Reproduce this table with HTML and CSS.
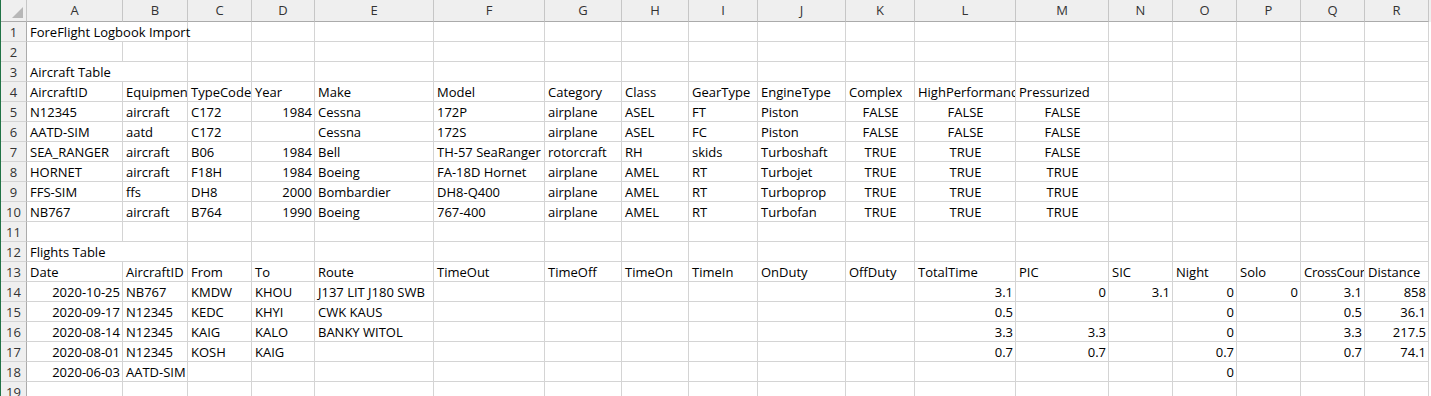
FILE: index.html
```html
<!DOCTYPE html>
<html>
<head>
<meta charset="utf-8">
<title>ForeFlight Logbook Import</title>
<link rel="stylesheet" href="styles.css">
</head>
<body>
<div class="sheet">
  <div class="row head">
    <div class="corner"><svg class="tri" width="11" height="11" viewBox="0 0 11 11"><polygon points="11,0 11,11 0,11" fill="#b7b7b7"/></svg></div>
    <div class="ch">A</div><div class="ch">B</div><div class="ch">C</div><div class="ch">D</div><div class="ch">E</div><div class="ch">F</div><div class="ch">G</div><div class="ch">H</div><div class="ch">I</div><div class="ch">J</div><div class="ch">K</div><div class="ch">L</div><div class="ch">M</div><div class="ch">N</div><div class="ch">O</div><div class="ch">P</div><div class="ch">Q</div><div class="ch">R</div>
  </div>

  <div class="row">
    <div class="rh">1</div>
    <div class="c span2">ForeFlight Logbook Import</div><div class="c"></div><div class="c"></div><div class="c"></div><div class="c"></div><div class="c"></div><div class="c"></div><div class="c"></div><div class="c"></div><div class="c"></div><div class="c"></div><div class="c"></div><div class="c"></div><div class="c"></div><div class="c"></div><div class="c"></div><div class="c"></div>
  </div>

  <div class="row">
    <div class="rh">2</div>
    <div class="c"></div><div class="c"></div><div class="c"></div><div class="c"></div><div class="c"></div><div class="c"></div><div class="c"></div><div class="c"></div><div class="c"></div><div class="c"></div><div class="c"></div><div class="c"></div><div class="c"></div><div class="c"></div><div class="c"></div><div class="c"></div><div class="c"></div><div class="c"></div>
  </div>

  <div class="row">
    <div class="rh">3</div>
    <div class="c span2">Aircraft Table</div><div class="c"></div><div class="c"></div><div class="c"></div><div class="c"></div><div class="c"></div><div class="c"></div><div class="c"></div><div class="c"></div><div class="c"></div><div class="c"></div><div class="c"></div><div class="c"></div><div class="c"></div><div class="c"></div><div class="c"></div><div class="c"></div>
  </div>

  <div class="row">
    <div class="rh">4</div>
    <div class="c">AircraftID</div><div class="c cut">Equipmen</div><div class="c">TypeCode</div><div class="c">Year</div><div class="c">Make</div><div class="c">Model</div><div class="c">Category</div><div class="c">Class</div><div class="c">GearType</div><div class="c">EngineType</div><div class="c">Complex</div><div class="c cut">HighPerformanc</div><div class="c">Pressurized</div><div class="c"></div><div class="c"></div><div class="c"></div><div class="c"></div><div class="c"></div>
  </div>

  <div class="row">
    <div class="rh">5</div>
    <div class="c">N12345</div><div class="c">aircraft</div><div class="c">C172</div><div class="c r">1984</div><div class="c">Cessna</div><div class="c">172P</div><div class="c">airplane</div><div class="c">ASEL</div><div class="c">FT</div><div class="c">Piston</div><div class="c m">FALSE</div><div class="c m">FALSE</div><div class="c m">FALSE</div><div class="c"></div><div class="c"></div><div class="c"></div><div class="c"></div><div class="c"></div>
  </div>

  <div class="row">
    <div class="rh">6</div>
    <div class="c">AATD-SIM</div><div class="c">aatd</div><div class="c">C172</div><div class="c r"></div><div class="c">Cessna</div><div class="c">172S</div><div class="c">airplane</div><div class="c">ASEL</div><div class="c">FC</div><div class="c">Piston</div><div class="c m">FALSE</div><div class="c m">FALSE</div><div class="c m">FALSE</div><div class="c"></div><div class="c"></div><div class="c"></div><div class="c"></div><div class="c"></div>
  </div>

  <div class="row">
    <div class="rh">7</div>
    <div class="c">SEA_RANGER</div><div class="c">aircraft</div><div class="c">B06</div><div class="c r">1984</div><div class="c">Bell</div><div class="c">TH-57 SeaRanger</div><div class="c">rotorcraft</div><div class="c">RH</div><div class="c">skids</div><div class="c">Turboshaft</div><div class="c m">TRUE</div><div class="c m">TRUE</div><div class="c m">FALSE</div><div class="c"></div><div class="c"></div><div class="c"></div><div class="c"></div><div class="c"></div>
  </div>

  <div class="row">
    <div class="rh">8</div>
    <div class="c">HORNET</div><div class="c">aircraft</div><div class="c">F18H</div><div class="c r">1984</div><div class="c">Boeing</div><div class="c">FA-18D Hornet</div><div class="c">airplane</div><div class="c">AMEL</div><div class="c">RT</div><div class="c">Turbojet</div><div class="c m">TRUE</div><div class="c m">TRUE</div><div class="c m">TRUE</div><div class="c"></div><div class="c"></div><div class="c"></div><div class="c"></div><div class="c"></div>
  </div>

  <div class="row">
    <div class="rh">9</div>
    <div class="c">FFS-SIM</div><div class="c">ffs</div><div class="c">DH8</div><div class="c r">2000</div><div class="c">Bombardier</div><div class="c">DH8-Q400</div><div class="c">airplane</div><div class="c">AMEL</div><div class="c">RT</div><div class="c">Turboprop</div><div class="c m">TRUE</div><div class="c m">TRUE</div><div class="c m">TRUE</div><div class="c"></div><div class="c"></div><div class="c"></div><div class="c"></div><div class="c"></div>
  </div>

  <div class="row">
    <div class="rh">10</div>
    <div class="c">NB767</div><div class="c">aircraft</div><div class="c">B764</div><div class="c r">1990</div><div class="c">Boeing</div><div class="c">767-400</div><div class="c">airplane</div><div class="c">AMEL</div><div class="c">RT</div><div class="c">Turbofan</div><div class="c m">TRUE</div><div class="c m">TRUE</div><div class="c m">TRUE</div><div class="c"></div><div class="c"></div><div class="c"></div><div class="c"></div><div class="c"></div>
  </div>

  <div class="row">
    <div class="rh">11</div>
    <div class="c"></div><div class="c"></div><div class="c"></div><div class="c"></div><div class="c"></div><div class="c"></div><div class="c"></div><div class="c"></div><div class="c"></div><div class="c"></div><div class="c"></div><div class="c"></div><div class="c"></div><div class="c"></div><div class="c"></div><div class="c"></div><div class="c"></div><div class="c"></div>
  </div>

  <div class="row">
    <div class="rh">12</div>
    <div class="c span2">Flights Table</div><div class="c"></div><div class="c"></div><div class="c"></div><div class="c"></div><div class="c"></div><div class="c"></div><div class="c"></div><div class="c"></div><div class="c"></div><div class="c"></div><div class="c"></div><div class="c"></div><div class="c"></div><div class="c"></div><div class="c"></div><div class="c"></div>
  </div>

  <div class="row">
    <div class="rh">13</div>
    <div class="c">Date</div><div class="c">AircraftID</div><div class="c">From</div><div class="c">To</div><div class="c">Route</div><div class="c">TimeOut</div><div class="c">TimeOff</div><div class="c">TimeOn</div><div class="c">TimeIn</div><div class="c">OnDuty</div><div class="c">OffDuty</div><div class="c">TotalTime</div><div class="c">PIC</div><div class="c">SIC</div><div class="c">Night</div><div class="c">Solo</div><div class="c cut tight">CrossCour</div><div class="c">Distance</div>
  </div>

  <div class="row">
    <div class="rh">14</div>
    <div class="c r">2020-10-25</div><div class="c">NB767</div><div class="c">KMDW</div><div class="c">KHOU</div><div class="c">J137 LIT J180 SWB</div><div class="c"></div><div class="c"></div><div class="c"></div><div class="c"></div><div class="c"></div><div class="c"></div><div class="c r">3.1</div><div class="c r">0</div><div class="c r">3.1</div><div class="c r">0</div><div class="c r">0</div><div class="c r">3.1</div><div class="c r">858</div>
  </div>

  <div class="row">
    <div class="rh">15</div>
    <div class="c r">2020-09-17</div><div class="c">N12345</div><div class="c">KEDC</div><div class="c">KHYI</div><div class="c">CWK KAUS</div><div class="c"></div><div class="c"></div><div class="c"></div><div class="c"></div><div class="c"></div><div class="c"></div><div class="c r">0.5</div><div class="c r"></div><div class="c r"></div><div class="c r">0</div><div class="c r"></div><div class="c r">0.5</div><div class="c r">36.1</div>
  </div>

  <div class="row">
    <div class="rh">16</div>
    <div class="c r">2020-08-14</div><div class="c">N12345</div><div class="c">KAIG</div><div class="c">KALO</div><div class="c">BANKY WITOL</div><div class="c"></div><div class="c"></div><div class="c"></div><div class="c"></div><div class="c"></div><div class="c"></div><div class="c r">3.3</div><div class="c r">3.3</div><div class="c r"></div><div class="c r">0</div><div class="c r"></div><div class="c r">3.3</div><div class="c r">217.5</div>
  </div>

  <div class="row">
    <div class="rh">17</div>
    <div class="c r">2020-08-01</div><div class="c">N12345</div><div class="c">KOSH</div><div class="c">KAIG</div><div class="c"></div><div class="c"></div><div class="c"></div><div class="c"></div><div class="c"></div><div class="c"></div><div class="c"></div><div class="c r">0.7</div><div class="c r">0.7</div><div class="c r"></div><div class="c r">0.7</div><div class="c r"></div><div class="c r">0.7</div><div class="c r">74.1</div>
  </div>

  <div class="row">
    <div class="rh">18</div>
    <div class="c r">2020-06-03</div><div class="c">AATD-SIM</div><div class="c"></div><div class="c"></div><div class="c"></div><div class="c"></div><div class="c"></div><div class="c"></div><div class="c"></div><div class="c"></div><div class="c"></div><div class="c r"></div><div class="c r"></div><div class="c r"></div><div class="c r">0</div><div class="c r"></div><div class="c r"></div><div class="c r"></div>
  </div>

  <div class="row">
    <div class="rh">19</div>
    <div class="c"></div><div class="c"></div><div class="c"></div><div class="c"></div><div class="c"></div><div class="c"></div><div class="c"></div><div class="c"></div><div class="c"></div><div class="c"></div><div class="c"></div><div class="c"></div><div class="c"></div><div class="c"></div><div class="c"></div><div class="c"></div><div class="c"></div><div class="c"></div>
  </div>
</div>
</body>
</html>
```

FILE: styles.css
```css
html, body {
  margin: 0;
  padding: 0;
  background: #ffffff;
}
body {
  width: 1431px;
  height: 396px;
  overflow: hidden;
  font-family: "Open Sans", "Liberation Sans", sans-serif;
  font-size: 13px;
  color: #000000;
}
.sheet {
  display: flex;
  flex-direction: column;
  border-left: 1px solid #217346;
  height: 396px;
}
.row {
  display: grid;
  grid-template-columns: 26px 96px 65px 64px 63px 119px 111px 77px 67px 69px 88px 69px 101px 93px 64px 64px 64px 64px 64px;
  height: 20px;
  flex: none;
}
.row.head {
  height: 22px;
  background: #efefef;
}
.corner {
  box-sizing: border-box;
  border-right: 1px solid #c6c6c6;
  border-bottom: 1px solid #ababab;
  display: flex;
  align-items: flex-end;
  justify-content: flex-end;
  padding: 0 3px 3px 0;
}
.tri { display: block; }
.ch {
  box-sizing: border-box;
  border-right: 1px solid #c6c6c6;
  border-bottom: 1px solid #ababab;
  text-align: center;
  line-height: 20px;
  color: #333333;
}
.rh {
  box-sizing: border-box;
  background: #efefef;
  border-right: 1px solid #ababab;
  border-bottom: 1px solid #d4d4d4;
  text-align: center;
  color: #333333;
  line-height: 18px;
  padding-top: 1px;
}
.c {
  box-sizing: border-box;
  border-right: 1px solid #d4d4d4;
  border-bottom: 1px solid #d4d4d4;
  white-space: nowrap;
  padding: 1px 2px 0 3px;
  line-height: 18px;
}
.c.cut {
  overflow: hidden;
  text-overflow: clip;
  padding-right: 0;
}
.c.tight { letter-spacing: -0.25px; }
.c.span2 { grid-column: span 2; }
.c.r { text-align: right; }
.c.m { text-align: center; }
```
